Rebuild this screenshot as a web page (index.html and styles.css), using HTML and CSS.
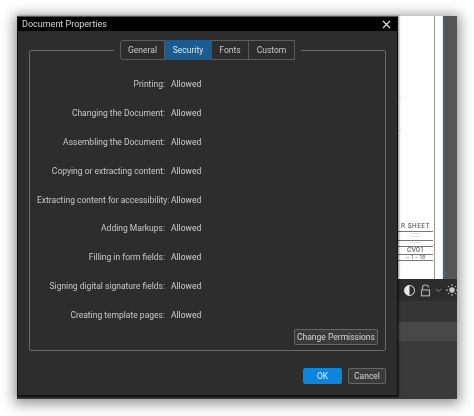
FILE: index.html
```html
<!DOCTYPE html>
<html lang="en">
<head>
<meta charset="utf-8">
<title>Document Properties</title>
<link rel="stylesheet" href="styles.css">
</head>
<body>
<div class="app">
  <div class="backdrop">
    <div class="doc-area">
      <div class="page">
        <div class="sheet">
          <div class="mark mark-a">—</div>
          <div class="mark mark-b">—</div>
          <div class="title-block">
            <div class="tb-title">R SHEET</div>
            <div class="tb-row tb-small">— ———<br>— ———</div>
            <div class="tb-row tb-small">— ———</div>
            <div class="tb-row tb-code">CV01</div>
            <div class="tb-row tb-num">— 1 – 18</div>
          </div>
        </div>
      </div>
      <div class="page-edge"></div>
      <div class="gutter"></div>
    </div>
    <div class="toolbar">
      <svg class="tool-icon" width="13" height="13" viewBox="0 0 13 13"><circle cx="6.5" cy="6.5" r="5" fill="#2b2b2b" stroke="#e8e8e8"/><path d="M6.5 1.5a5 5 0 0 1 0 10z" fill="#e8e8e8" transform="matrix(-1 0 0 1 13 0)"/></svg>
      <svg class="tool-icon" width="11" height="13" viewBox="0 0 11 13"><path d="M2.5 6V3.6a3 2.6 0 0 1 6 0" fill="none" stroke="#aaa" stroke-width="1.2"/><rect x="1.5" y="6" width="8" height="5.8" fill="none" stroke="#aaa" stroke-width="1.2"/></svg>
      <svg class="tool-icon" width="7" height="5" viewBox="0 0 7 5"><path d="M1 1l2.5 2.5L6 1" fill="none" stroke="#888"/></svg>
      <svg class="tool-icon" width="12" height="12" viewBox="0 0 12 12"><circle cx="6" cy="6" r="2.7" fill="#c4c4c4"/><path d="M6 0v2M6 10v2M0 6h2M10 6h2M1.8 1.8l1.4 1.4M8.8 8.8l1.4 1.4M1.8 10.2l1.4-1.4M8.8 3.2l1.4-1.4" stroke="#c4c4c4"/></svg>
    </div>
    <div class="lower lower-dark"></div>
    <div class="lower lower-mid"></div>
    <div class="lower lower-rest"></div>
  </div>

  <section class="dialog">
    <header class="dialog-title">
      <span>Document Properties</span>
      <svg width="9" height="9" viewBox="0 0 9 9"><path d="M1 1l7 7M8 1L1 8" stroke="#e6e6e6" stroke-width="1.1"/></svg>
    </header>
    <div class="dialog-body">
      <div class="group">
        <nav class="tabs">
          <div class="tab tab-general">General</div>
          <div class="tab tab-security">Security</div>
          <div class="tab tab-fonts">Fonts</div>
          <div class="tab tab-custom">Custom</div>
        </nav>
        <div class="rows">
          <div class="row"><span class="label">Printing:</span><span>Allowed</span></div>
          <div class="row"><span class="label">Changing the Document:</span><span>Allowed</span></div>
          <div class="row"><span class="label">Assembling the Document:</span><span>Allowed</span></div>
          <div class="row"><span class="label">Copying or extracting content:</span><span>Allowed</span></div>
          <div class="row"><span class="label">Extracting content for accessibility:</span><span>Allowed</span></div>
          <div class="row"><span class="label">Adding Markups:</span><span>Allowed</span></div>
          <div class="row"><span class="label">Filling in form fields:</span><span>Allowed</span></div>
          <div class="row"><span class="label">Signing digital signature fields:</span><span>Allowed</span></div>
          <div class="row"><span class="label">Creating template pages:</span><span>Allowed</span></div>
        </div>
        <div class="group-actions"><button class="btn btn-change">Change Permissions</button></div>
      </div>
      <div class="dialog-actions">
        <button class="btn btn-ok">OK</button>
        <button class="btn btn-cancel">Cancel</button>
      </div>
    </div>
  </section>
</div>
</body>
</html>
```
FILE: styles.css
```css
* { box-sizing: border-box; }
html, body { margin: 0; height: 100%; background: #fff; overflow: hidden; }
body { padding: 16px 0 0 17px; font-family: Roboto, "Liberation Sans", sans-serif; }

.app {
  position: relative;
  width: 440px;
  height: 383px;
  box-shadow: 0 2px 12px 3px rgba(0, 0, 0, .42);
  filter: blur(.35px);
}

.backdrop { display: flex; flex-direction: column; height: 100%; padding-left: 381px; background: #3a3a3a; }

.doc-area { display: flex; height: 263px; background: #555; }
.page { width: 37px; background: #fff; }
.sheet { position: relative; height: 100%; border-right: 1px solid #999; }
.mark { position: absolute; left: 0; font-size: 4px; color: #888; }
.mark-a { top: 79px; }
.mark-b { top: 112px; }
.title-block {
  position: absolute;
  left: 0; right: 1px; top: 207px;
  color: #444;
  text-align: center;
  line-height: 1;
}
.tb-title { font-size: 6.5px; letter-spacing: .5px; height: 8px; white-space: nowrap; }
.tb-row { border-top: 1px solid #777; }
.tb-small { font-size: 3px; color: #888; padding: 1px 0; }
.tb-code { font-size: 7px; height: 8px; }
.tb-num { font-size: 5px; height: 7px; border-bottom: 1px solid #777; }
.page-edge { width: 8px; background: #fff; border-right: 1px solid #e4e8ec; }
.gutter { width: 14px; background: #555; border-left: 2px solid #4c6070; }

.toolbar {
  display: flex;
  align-items: center;
  gap: 4px;
  height: 22px;
  padding-left: 5px;
  background: #2c2c2c;
  overflow: hidden;
  flex: none;
}
.tool-icon { flex: none; }
.lower { flex: none; }
.lower-dark { height: 21px; background: #353535; }
.lower-mid { height: 19px; background: #484848; }
.lower-rest { flex: 1; background: #3a3a3a; }

.dialog {
  position: absolute;
  left: 0; top: 0;
  width: 381px;
  height: 381px;
  display: flex;
  flex-direction: column;
  background: #2d2d2d;
  border: 1px solid #111;
  border-top-color: #555;
  border-bottom: 2px solid #141414;
  box-shadow: 1px 0 2px rgba(0, 0, 0, .5);
  color: #d4d4d4;
}
.dialog-title {
  display: flex;
  align-items: center;
  justify-content: space-between;
  height: 14px;
  padding: 0 6px 0 4px;
  background: #000;
  color: #dcdcdc;
  font-size: 9px;
  flex: none;
}
.dialog-body { flex: 1; display: flex; flex-direction: column; padding: 19px 11px 0; }

.group {
  display: flex;
  flex-direction: column;
  height: 301px;
  border: 1px solid #6a6a6a;
  border-radius: 2px;
  padding: 0 7px 6px;
}
.tabs {
  display: flex;
  align-self: center;
  margin-top: -11px;
  padding: 0 6px;
  background: #2d2d2d;
  flex: none;
}
.tab {
  display: flex;
  align-items: center;
  justify-content: center;
  height: 20px;
  font-size: 8.5px;
  border: 1px solid #5c5c5c;
  border-left: 0;
  color: #c8c8c8;
}
.tab-general { width: 45px; border-left: 1px solid #5c5c5c; border-radius: 3px 0 0 3px; }
.tab-security { width: 47px; background: #1a5c90; border-color: #1a5c90; color: #d8e6f0; }
.tab-fonts { width: 37px; }
.tab-custom { width: 46px; }

.rows { display: flex; flex-direction: column; padding-top: 10px; flex: none; }
.row {
  display: grid;
  grid-template-columns: 128px auto;
  column-gap: 6px;
  height: 28.8px;
  align-items: center;
  font-size: 8.5px;
  color: #d2d2d2;
  white-space: nowrap;
}
.label { text-align: right; color: #c8c8c8; }

.group-actions { display: flex; justify-content: flex-end; margin-top: auto; }

.btn {
  height: 16px;
  padding: 0;
  font: inherit;
  font-size: 8.5px;
  border: 1px solid #666;
  border-radius: 2px;
  background: #3a3a3a;
  color: #d4d4d4;
}
.btn-change { width: 84px; }
.dialog-actions { display: flex; justify-content: flex-end; gap: 6px; margin-top: 17px; }
.btn-ok { width: 39px; background: #0d84de; border-color: #0d84de; color: #dff0ff; }
.btn-cancel { width: 38px; }
```
